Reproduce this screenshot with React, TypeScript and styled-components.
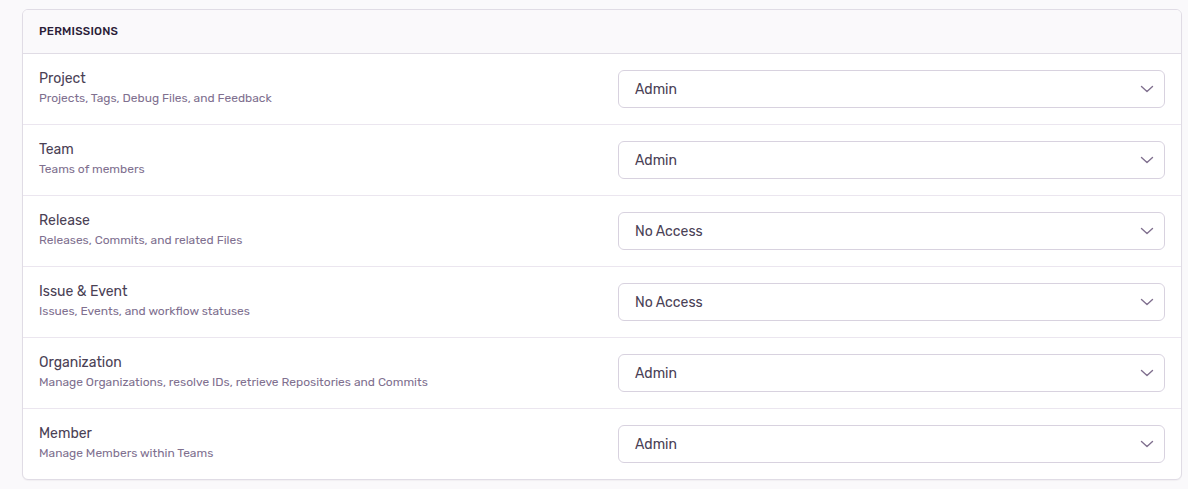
import React from "react";
import styled, {createGlobalStyle} from "styled-components";

const GlobalStyle = createGlobalStyle`
    html, body {
        margin: 0;
        padding: 0;
        background: #faf9fb;
        font-family: "Rubik", "Inter", "Noto Sans", sans-serif;
        -webkit-font-smoothing: antialiased;
    }
`

const permissions = [
    {title: "Project", text: "Projects, Tags, Debug Files, and Feedback", value: "Admin"},
    {title: "Team", text: "Teams of members", value: "Admin"},
    {title: "Release", text: "Releases, Commits, and related Files", value: "No Access"},
    {title: "Issue & Event", text: "Issues, Events, and workflow statuses", value: "No Access"},
    {title: "Organization", text: "Manage Organizations, resolve IDs, retrieve Repositories and Commits", value: "Admin"},
    {title: "Member", text: "Manage Members within Teams", value: "Admin"},
]

const Chevron = () => (
    <svg width="14" height="14" viewBox="0 0 14 14" fill="none">
        <path d="M1.5 4.5 L7 9.5 L12.5 4.5" stroke="#80708f" strokeWidth="1.4" strokeLinecap="round" strokeLinejoin="round"/>
    </svg>
)

export default function App() {
    return (
        <Page>
            <GlobalStyle/>
            <Panel>
                <PanelHeader>Permissions</PanelHeader>
                {permissions.map((item, index) => {
                    return <Row key={index}>
                        <Label>
                            <Title>{item.title}</Title>
                            <Help>{item.text}</Help>
                        </Label>
                        <Select>
                            <span>{item.value}</span>
                            <Chevron/>
                        </Select>
                    </Row>
                })}
            </Panel>
        </Page>
    )
}

const Page = styled.div`
    padding: 9px 6px 10px 22px;
`

const Panel = styled.div`
    background: #fff;
    border: 1px solid #e0dce5;
    border-radius: 6px;
    box-shadow: 0 1px 1px rgba(43, 34, 51, 0.04);
    overflow: hidden;
`

const PanelHeader = styled.div`
    padding: 14px 16px;
    line-height: 15px;
    font-size: 11.5px;
    font-weight: 500;
    letter-spacing: 0.2px;
    text-transform: uppercase;
    color: #2b1d38;
    background: #faf9fb;
    border-bottom: 1px solid #e0dce5;
`

const Row = styled.div`
    display: grid;
    grid-template-columns: 1fr 1fr;
    column-gap: 32px;
    align-items: start;
    padding: 16px;

    & + & {
        border-top: 1px solid #ebe6ef;
    }
`

const Label = styled.div`
    display: flex;
    flex-direction: column;
    gap: 3px;
    padding-top: 1px;
`

const Title = styled.div`
    font-size: 14px;
    line-height: 16px;
    color: #4a4155;
`

const Help = styled.div`
    font-size: 12px;
    line-height: 16px;
    color: #80708f;
`

const Select = styled.div`
    display: flex;
    align-items: center;
    justify-content: space-between;
    box-sizing: border-box;
    height: 38px;
    padding: 0 10px 0 16px;
    border: 1px solid #d8d2df;
    border-radius: 6px;
    font-size: 14px;
    color: #4a4155;
    background: #fff;
`
